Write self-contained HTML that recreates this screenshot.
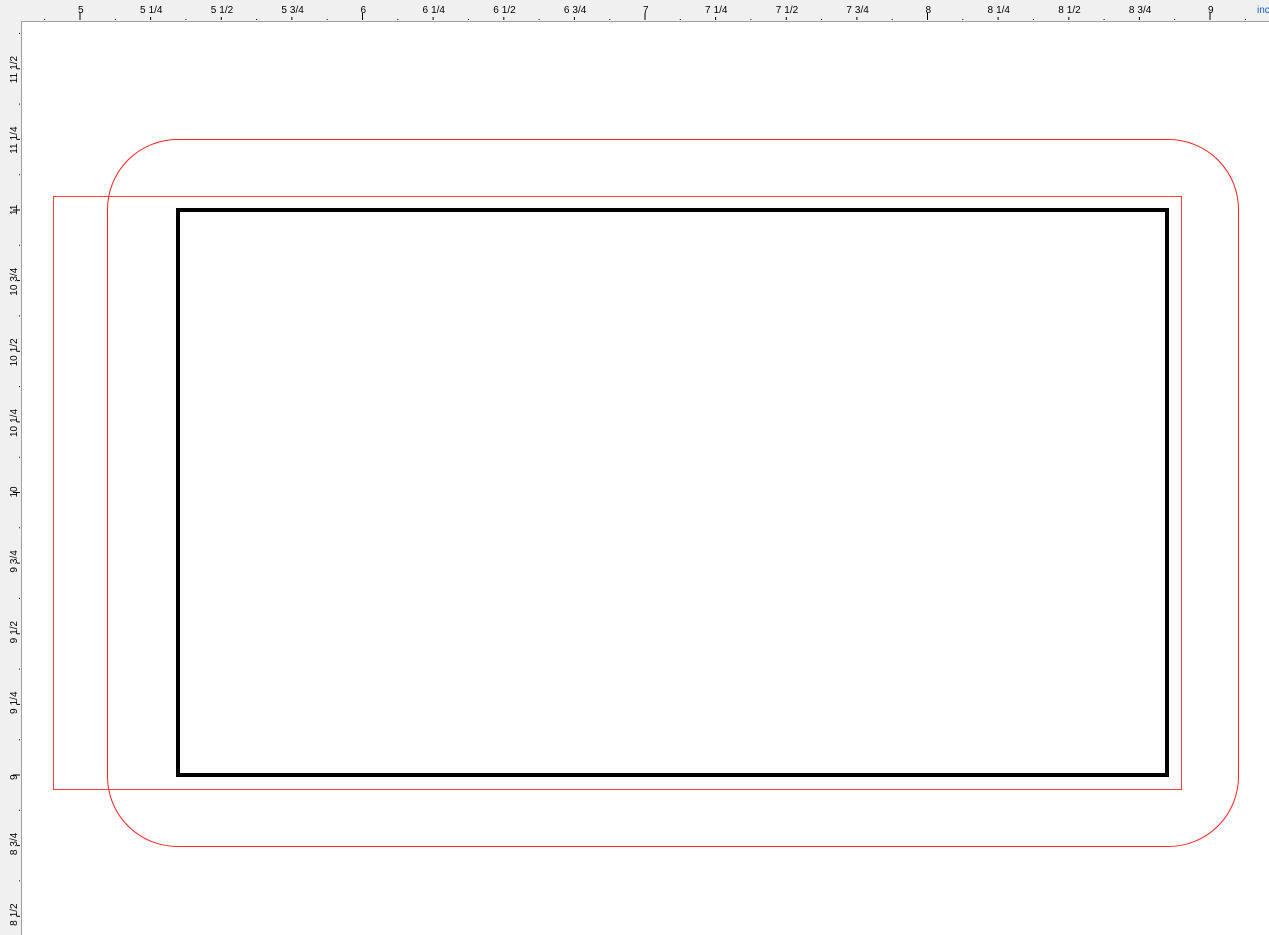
<!DOCTYPE html>
<html><head><meta charset="utf-8"><style>
html,body{margin:0;padding:0;width:1269px;height:935px;overflow:hidden;background:#fff}
svg{display:block}
text{font-family:"Liberation Sans",sans-serif;font-size:10px;fill:#000}
</style></head><body>
<svg id="s" width="1269" height="935" xmlns="http://www.w3.org/2000/svg">
<rect x="0" y="0" width="1269" height="21" fill="#f0f0f0"/>
<rect x="0" y="0" width="21" height="935" fill="#f0f0f0"/>
<line x1="21" y1="21.5" x2="1269" y2="21.5" stroke="#a0a0a0"/>
<line x1="21.5" y1="21" x2="21.5" y2="935" stroke="#a0a0a0"/>
<g id="t"></g>
<rect x="53.5" y="196.5" width="1128" height="593" fill="none" stroke="#ff4040" stroke-width="1"/>
<rect x="107.5" y="139.5" width="1131" height="707" rx="70" ry="70" fill="none" stroke="#ff2020" stroke-width="1"/>
<rect x="178" y="210" width="989" height="565" fill="none" stroke="#000" stroke-width="4"/>
<text x="1257" y="13" style="fill:#1060c0">inch</text>
</svg>
<script>
var g=document.getElementById('t'),h='';
var P=282.5;
for(var k=-2;k<40;k++){var x=80+k*P/8;if(x<24||x>1250)continue;var m=((k%8)+8)%8;var len=m==0?8:(m%2==0?4:2);
h+='<line x1="'+x.toFixed(1)+'" y1="'+(21-len)+'" x2="'+x.toFixed(1)+'" y2="20" stroke="#000"/>';
if(m%2==0){var w=5+Math.floor(k/8);
 if(m==0){h+='<text x="'+(x-2).toFixed(1)+'" y="13">'+w+'</text>';}
 else{var fr=['','','1/4','','1/2','','3/4'][m];h+='<text x="'+(x-2).toFixed(1)+'" y="13">'+fr+'</text><text x="'+(x-5).toFixed(1)+'" y="13" text-anchor="end">'+w+'</text>';}}}
for(var k=-12;k<40;k++){var y=210+k*P/8;if(y<24||y>935)continue;var m=((k%8)+8)%8;var len=m==0?8:(m%2==0?4:2);
h+='<line x1="'+(21-len)+'" y1="'+y.toFixed(1)+'" x2="20" y2="'+y.toFixed(1)+'" stroke="#000"/>';
if(m%2==0){var w=11-Math.ceil(k/8);
 if(m==0){h+='<text transform="translate(17,'+(y+5).toFixed(1)+') rotate(-90)">'+(11-k/8)+'</text>';}
 else{var fr=['','','3/4','','1/2','','1/4'][m];h+='<text transform="translate(17,'+(y+1).toFixed(1)+') rotate(-90)">'+fr+'</text><text transform="translate(17,'+(y+4).toFixed(1)+') rotate(-90)" text-anchor="end">'+w+'</text>';}}}
g.innerHTML=h;
</script>
</body></html>
